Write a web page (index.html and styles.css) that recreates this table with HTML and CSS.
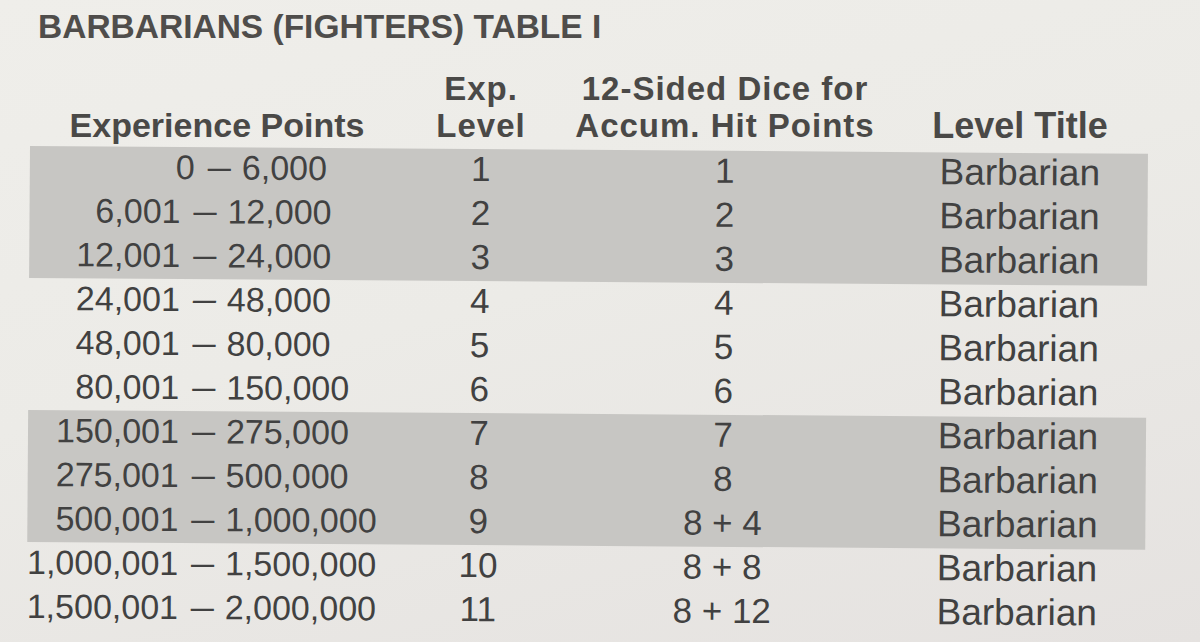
FILE: index.html
```html
<!DOCTYPE html>
<html lang="en">
<head>
<meta charset="utf-8">
<title>Barbarians (Fighters) Table I</title>
<link rel="stylesheet" href="styles.css">
</head>
<body>
<main class="page">
  <h1 class="title">BARBARIANS (FIGHTERS) TABLE I</h1>
  <div class="table">
    <div class="row head">
      <div class="c1">Experience Points</div>
      <div class="c2"><span class="l1">Exp.</span><span class="l2">Level</span></div>
      <div class="c3"><span class="l1">12-Sided Dice for</span><span class="l2">Accum. Hit Points</span></div>
      <div class="c4">Level Title</div>
    </div>
    <div class="rows">
      <div class="band">
        <div class="row">
          <div class="c1 xp shift"><span class="lo">0</span><span class="dash">—</span><span class="hi">6,000</span></div>
          <div class="c2">1</div><div class="c3">1</div><div class="c4">Barbarian</div>
        </div>
        <div class="row">
          <div class="c1 xp"><span class="lo">6,001</span><span class="dash">—</span><span class="hi">12,000</span></div>
          <div class="c2">2</div><div class="c3">2</div><div class="c4">Barbarian</div>
        </div>
        <div class="row">
          <div class="c1 xp"><span class="lo">12,001</span><span class="dash">—</span><span class="hi">24,000</span></div>
          <div class="c2">3</div><div class="c3">3</div><div class="c4">Barbarian</div>
        </div>
      </div>
      <div class="row">
        <div class="c1 xp"><span class="lo">24,001</span><span class="dash">—</span><span class="hi">48,000</span></div>
        <div class="c2">4</div><div class="c3">4</div><div class="c4">Barbarian</div>
      </div>
      <div class="row">
        <div class="c1 xp"><span class="lo">48,001</span><span class="dash">—</span><span class="hi">80,000</span></div>
        <div class="c2">5</div><div class="c3">5</div><div class="c4">Barbarian</div>
      </div>
      <div class="row">
        <div class="c1 xp"><span class="lo">80,001</span><span class="dash">—</span><span class="hi">150,000</span></div>
        <div class="c2">6</div><div class="c3">6</div><div class="c4">Barbarian</div>
      </div>
      <div class="band">
        <div class="row">
          <div class="c1 xp"><span class="lo">150,001</span><span class="dash">—</span><span class="hi">275,000</span></div>
          <div class="c2">7</div><div class="c3">7</div><div class="c4">Barbarian</div>
        </div>
        <div class="row">
          <div class="c1 xp"><span class="lo">275,001</span><span class="dash">—</span><span class="hi">500,000</span></div>
          <div class="c2">8</div><div class="c3">8</div><div class="c4">Barbarian</div>
        </div>
        <div class="row">
          <div class="c1 xp"><span class="lo">500,001</span><span class="dash">—</span><span class="hi">1,000,000</span></div>
          <div class="c2">9</div><div class="c3">8 + 4</div><div class="c4">Barbarian</div>
        </div>
      </div>
      <div class="row">
        <div class="c1 xp"><span class="lo">1,000,001</span><span class="dash">—</span><span class="hi">1,500,000</span></div>
        <div class="c2">10</div><div class="c3">8 + 8</div><div class="c4">Barbarian</div>
      </div>
      <div class="row">
        <div class="c1 xp"><span class="lo">1,500,001</span><span class="dash">—</span><span class="hi">2,000,000</span></div>
        <div class="c2">11</div><div class="c3">8 + 12</div><div class="c4">Barbarian</div>
      </div>
    </div>
  </div>
</main>
</body>
</html>
```

FILE: styles.css
```css
html, body {
  margin: 0;
  padding: 0;
}
body {
  width: 1200px;
  height: 642px;
  overflow: hidden;
  background: linear-gradient(165deg, #efeeea 0%, #ecebe7 45%, #e5e2e0 100%);
  font-family: "Liberation Sans", Arial, Helvetica, sans-serif;
  color: #414141;
}
.page {
  padding: 7px 0 0 30px;
}
.title {
  margin: 0 0 0 8px;
  font-size: 33.5px;
  line-height: 40px;
  font-weight: bold;
  color: #4f4d4b;
}
.table {
  width: 1118px;
  margin-top: 23px;
}
.rows {
  transform: rotate(0.4deg);
  transform-origin: 0 0;
}
.band {
  background: #c7c6c3;
}
.row {
  display: grid;
  grid-template-columns: 374px 154px 334px 256px;
  height: 44px;
  line-height: 40px;
  font-size: 35px;
  text-align: center;
  white-space: nowrap;
}
.row .c1 {
  font-size: 34px;
}
.row .c4 {
  font-size: 37px;
}
.row.head {
  height: auto;
  line-height: 37px;
  font-weight: bold;
  color: #4a4947;
  align-items: end;
  padding-bottom: 2px;
}
.row.head .c1 {
  font-size: 34px;
}
.row.head .c2,
.row.head .c3 {
  display: flex;
  flex-direction: column;
  align-items: center;
  font-size: 33px;
  letter-spacing: 1px;
}
.row.head .c4 {
  font-size: 36px;
}
.xp {
  display: flex;
  text-align: left;
}
.xp.shift {
  padding-left: 14px;
}
.xp .lo {
  width: 151px;
  flex: none;
  text-align: right;
}
.xp .dash {
  font-size: 23px;
  margin: 0 11px 0 13px;
  vertical-align: 5px;
  text-shadow: 0 0.8px 0 #414141;
}
.xp .hi {
  flex: 1;
}
```
